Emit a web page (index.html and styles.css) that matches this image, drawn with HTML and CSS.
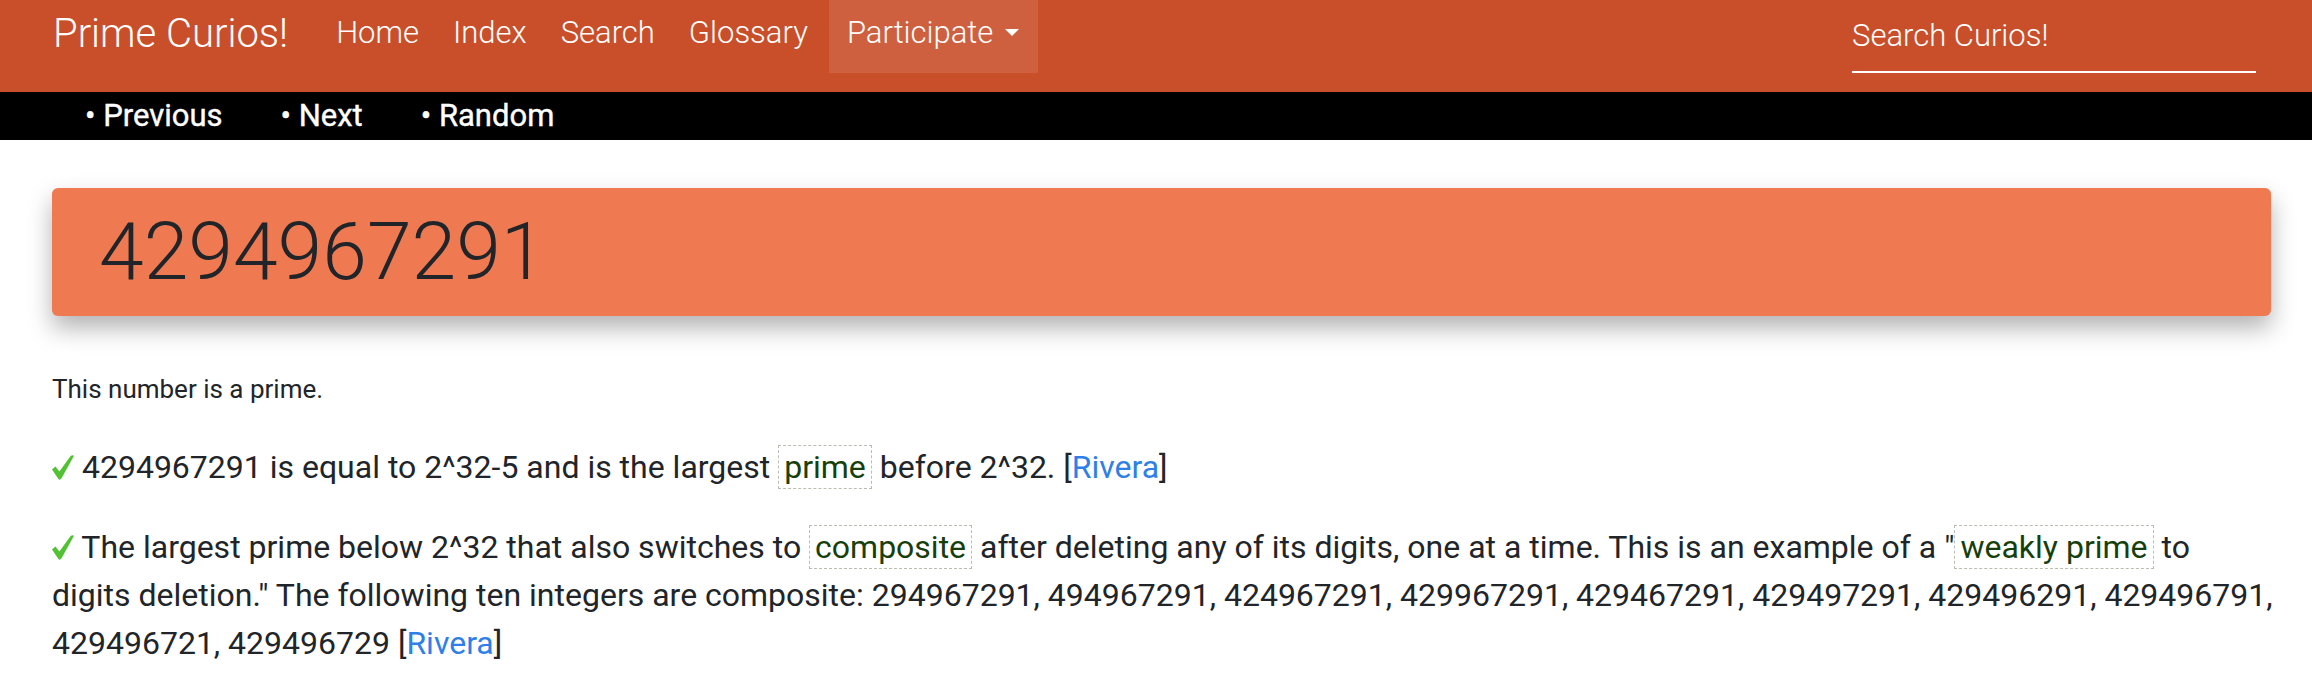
FILE: index.html
```html
<!DOCTYPE html>
<html lang="en">
<head>
    <meta charset="UTF-8">
    <meta name="viewport" content="width=device-width, initial-scale=1.0">
    <title>Prime Curios! 4294967291</title>
    <link rel="stylesheet" href="styles.css">
</head>
<body>
    <nav class="navbar">
        <a href="#" class="brand">Prime Curios!</a>
        <ul class="nav-links">
            <li><a href="#" class="nav-link">Home</a></li>
            <li><a href="#" class="nav-link">Index</a></li>
            <li><a href="#" class="nav-link">Search</a></li>
            <li><a href="#" class="nav-link">Glossary</a></li>
            <li class="nav-dropdown"><a href="#" class="nav-link active dropdown-toggle">Participate</a></li>
        </ul>
        <input class="search-input" type="text" placeholder="Search Curios!">
    </nav>
    <div class="subnav">
        <a href="#" class="subnav-link">&bull; Previous</a>
        <a href="#" class="subnav-link">&bull; Next</a>
        <a href="#" class="subnav-link">&bull; Random</a>
    </div>
    <main class="content">
        <div class="number-card">
            <h1 class="number">4294967291</h1>
        </div>
        <p class="status">This number is a prime.</p>
        <p class="curio first">
            <svg class="check" viewBox="0 0 22 25"><path d="M0 14.6 L3.4 11.6 L7.4 16.6 L18.6 1 Q20.4 -0.6 22 0.8 L9.4 23.6 Q7.8 25.6 6.2 23.8 Z"/></svg>
            4294967291 is equal to 2^32-5 and is the largest <a href="#" class="term">prime</a> before 2^32. [<a href="#" class="cite">Rivera</a>]
        </p>
        <p class="curio">
            <svg class="check" viewBox="0 0 22 25"><path d="M0 14.6 L3.4 11.6 L7.4 16.6 L18.6 1 Q20.4 -0.6 22 0.8 L9.4 23.6 Q7.8 25.6 6.2 23.8 Z"/></svg>
            The largest prime below 2^32 that also switches to <a href="#" class="term">composite</a> after deleting any of its digits, one at a time. This is an example of a "<a href="#" class="term">weakly prime</a> to digits deletion." The following ten integers are composite: 294967291, 494967291, 424967291, 429967291, 429467291, 429497291, 429496291, 429496791, 429496721, 429496729 [<a href="#" class="cite">Rivera</a>]
        </p>
    </main>
</body>
</html>
```
FILE: styles.css
```css
:root {
    --nav-color: #c94f2b;
    --card-color: #ef7a51;
    --text-color: #212529;
    --link-color: #2f7fe8;
    --term-color: #173f0c;
    --check-color: #52c234;
}

* {
    margin: 0;
    padding: 0;
    box-sizing: border-box;
}

body {
    font-family: Roboto, 'Liberation Sans', sans-serif;
    color: var(--text-color);
    background: #fff;
}

a {
    text-decoration: none;
}

.navbar {
    display: flex;
    align-items: flex-start;
    height: 92px;
    padding: 0 56px 0 53px;
    background: var(--nav-color);
}

.brand {
    font-size: 40px;
    font-weight: 300;
    line-height: 66px;
    padding-top: 1px;
    color: #fff;
    margin-right: 31px;
}

.nav-links {
    display: flex;
    list-style: none;
}

.nav-link {
    display: block;
    font-size: 31px;
    font-weight: 300;
    line-height: 66px;
    padding: 0 17px 7px;
    color: #fff;
}

.nav-dropdown {
    margin-left: 4px;
}

.nav-link.active {
    background: rgba(255, 255, 255, 0.1);
    padding: 0 19px 7px 18px;
}

.dropdown-toggle::after {
    content: '';
    display: inline-block;
    margin-left: 12px;
    vertical-align: 7px;
    border-top: 7px solid #fff;
    border-left: 7px solid transparent;
    border-right: 7px solid transparent;
}

.search-input {
    margin-left: auto;
    width: 404px;
    height: 73px;
    padding: 0;
    border: none;
    border-bottom: 2px solid #fff;
    background: transparent;
    font-family: inherit;
    font-size: 31px;
    font-weight: 300;
    color: #fff;
    outline: none;
}

.search-input::placeholder {
    color: #fff;
    opacity: 1;
}

.subnav {
    display: flex;
    gap: 58px;
    height: 48px;
    padding-left: 85px;
    background: #000;
}

.subnav-link {
    font-size: 31px;
    font-weight: 400;
    line-height: 48px;
    color: #fff;
    -webkit-text-stroke: 0.4px #fff;
}

.content {
    padding: 48px 41px 0 52px;
}

.number-card {
    height: 128px;
    padding: 0 47px;
    background: var(--card-color);
    border-radius: 6px;
    box-shadow: 0 12px 24px rgba(0, 0, 0, 0.3);
}

.number {
    font-size: 80.5px;
    font-weight: 300;
    line-height: 128px;
}

.status {
    margin-top: 56px;
    font-size: 26px;
    line-height: 35px;
}

.curio {
    margin-top: 32px;
    margin-right: -4px;
    font-size: 32px;
    line-height: 48px;
}

.curio.first {
    margin-top: 36px;
}

.check {
    width: 22px;
    height: 25px;
    vertical-align: -2px;
    fill: var(--check-color);
}

.term {
    padding: 2px 5px;
    border: 1px dashed #b9bdb2;
    color: var(--term-color);
}

.cite {
    color: var(--link-color);
}
```
